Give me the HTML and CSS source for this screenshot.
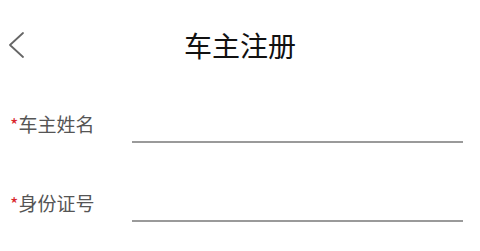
FILE: index.html
```html
<!DOCTYPE html>
<html lang="zh-CN">
<head>
    <meta charset="UTF-8">
    <meta name="viewport" content="width=device-width, initial-scale=1.0">
    <title>车主注册</title>
    <link rel="stylesheet" href="styles.css">
</head>
<body>

    <div class="header">
        <a class="back" href="#">
            <svg width="16" height="26" viewBox="0 0 16 26">
                <polyline points="15,1 2,13 15,25" fill="none" stroke="#666" stroke-width="1.8" stroke-linecap="round" stroke-linejoin="round"/>
            </svg>
        </a>
        <h1>车主注册</h1>
        <span></span>
    </div>

    <form class="reg-form">
        <div class="row">
            <label for="ownerName"><span class="req">*</span>车主姓名</label>
            <input type="text" id="ownerName">
        </div>
        <div class="row">
            <label for="idNumber"><span class="req">*</span>身份证号</label>
            <input type="text" id="idNumber">
        </div>
    </form>

</body>
</html>
```

FILE: styles.css
```css
body {
    margin: 0;
    background: #fff;
    font-family: "Noto Sans CJK SC", "Noto Sans", sans-serif;
}

.header {
    height: 90px;
    display: grid;
    grid-template-columns: 1fr auto 1fr;
    align-items: center;
}

.back {
    display: flex;
    padding-left: 8px;
    margin-top: -1px;
}

.header h1 {
    margin: 0;
    font-size: 28px;
    font-weight: normal;
    color: #111;
    line-height: 90px;
}

.reg-form {
    padding-top: 21px;
    display: flex;
    flex-direction: column;
    gap: 47px;
}

.row {
    display: flex;
    align-items: flex-end;
    padding-right: 17px;
}

.row label {
    width: 122px;
    padding-left: 10px;
    padding-bottom: 6px;
    font-size: 19px;
    line-height: 26px;
    color: #555;
}

.req {
    color: #d9262c;
    font-size: 18px;
}

.row input {
    flex: 1;
    min-width: 0;
    height: 30px;
    padding: 0;
    border: none;
    border-bottom: 2px solid #9a9a9a;
    outline: none;
    font-family: inherit;
    font-size: 18px;
}
```
